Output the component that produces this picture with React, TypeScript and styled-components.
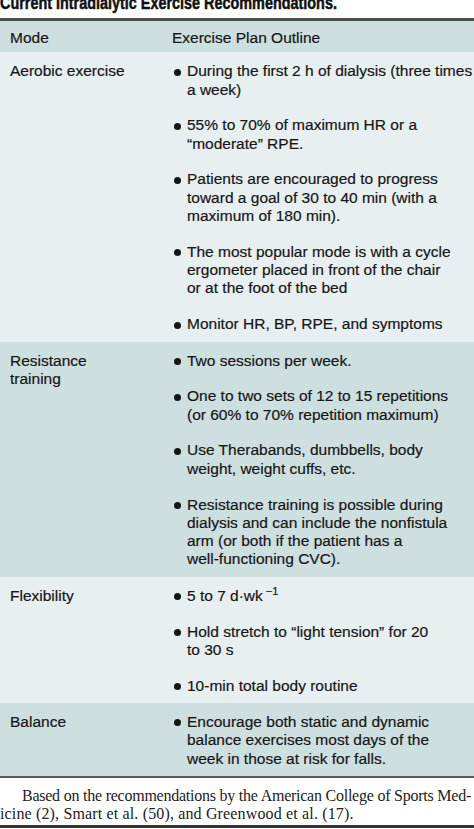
import React from "react";
import styled, { createGlobalStyle } from "styled-components";

const GlobalStyle = createGlobalStyle`
  html, body {
    margin: 0;
    padding: 0;
    background: #ffffff;
    overflow: hidden;
  }
`;

type Tone = "dark" | "light";

type Section = {
  mode: string[];
  tone: Tone;
  bullets: React.ReactNode[][];
};

const Sup = styled.sup`
  font-size: 11px;
  line-height: 0;
  vertical-align: 6px;
  margin-left: 3px;
`;

const sections: Section[] = [
  {
    mode: ["Aerobic exercise"],
    tone: "light",
    bullets: [
      ["During the first 2 h of dialysis (three times", "a week)"],
      ["55% to 70% of maximum HR or a", "\u201Cmoderate\u201D RPE."],
      [
        "Patients are encouraged to progress",
        "toward a goal of 30 to 40 min (with a",
        "maximum of 180 min).",
      ],
      [
        "The most popular mode is with a cycle",
        "ergometer placed in front of the chair",
        "or at the foot of the bed",
      ],
      ["Monitor HR, BP, RPE, and symptoms"],
    ],
  },
  {
    mode: ["Resistance", "training"],
    tone: "dark",
    bullets: [
      ["Two sessions per week."],
      ["One to two sets of 12 to 15 repetitions", "(or 60% to 70% repetition maximum)"],
      ["Use Therabands, dumbbells, body", "weight, weight cuffs, etc."],
      [
        "Resistance training is possible during",
        "dialysis and can include the nonfistula",
        "arm (or both if the patient has a",
        "well-functioning CVC).",
      ],
    ],
  },
  {
    mode: ["Flexibility"],
    tone: "light",
    bullets: [
      [
        <>
          5 to 7 d·wk<Sup>{"\u22121"}</Sup>
        </>,
      ],
      ["Hold stretch to \u201Clight tension\u201D for 20", "to 30 s"],
      ["10-min total body routine"],
    ],
  },
  {
    mode: ["Balance"],
    tone: "dark",
    bullets: [
      [
        "Encourage both static and dynamic",
        "balance exercises most days of the",
        "week in those at risk for falls.",
      ],
    ],
  },
];

const Page = styled.div`
  width: 474px;
  color: #161616;
  font-family: "Liberation Sans", Arial, sans-serif;
`;

const Caption = styled.div`
  height: 29px;
  margin-top: -11px;
  line-height: 29px;
  font-size: 18px;
  font-weight: 700;
  color: #111;
  white-space: nowrap;
  transform: scaleX(0.8);
  transform-origin: left center;
  -webkit-text-stroke: 0.5px #111;
`;

const Table = styled.div`
  border-top: 3px solid #4c4c4c;
  border-bottom: 2px solid #5a5a5a;
`;

const Row = styled.div<{ $tone: Tone; $head?: boolean }>`
  display: grid;
  grid-template-columns: 172px 1fr;
  padding: ${(p) => (p.$head ? "8px 0 5px" : "10px 0 8px")};
  background: ${(p) => (p.$tone === "dark" ? "#cedfe0" : "#e7eff1")};
  font-size: 15.5px;
  line-height: 18.3px;
  -webkit-text-stroke: 0.2px #161616;
`;

const ModeCell = styled.div`
  padding-left: 10px;
  white-space: nowrap;
`;

const PlanCell = styled.div`
  display: flex;
  flex-direction: column;
  gap: 17.5px;
  white-space: nowrap;
`;

const Bullet = styled.div`
  display: flex;
  align-items: flex-start;
`;

const Dot = styled.span`
  flex: none;
  width: 7px;
  height: 7px;
  margin: 6.5px 6px 0 2px;
  border-radius: 50%;
  background: #151515;
`;

const Footnote = styled.div`
  padding: 9px 3px 2px 0;
  border-bottom: 3px solid #333333;
  font-family: "Liberation Serif", "Times New Roman", serif;
  font-size: 16px;
  line-height: 18px;
  color: #222;
`;

const FootLine = styled.div<{ $first?: boolean }>`
  white-space: nowrap;
  text-indent: ${(p) => (p.$first ? "22px" : "0")};
  text-align: ${(p) => (p.$first ? "justify" : "left")};
  text-align-last: ${(p) => (p.$first ? "justify" : "left")};
  letter-spacing: ${(p) => (p.$first ? "-0.25px" : "0.15px")};
`;

const App = () => {
  return (
    <Page>
      <GlobalStyle />
      <Caption>Current Intradialytic Exercise Recommendations.</Caption>
      <Table>
        <Row $tone="dark" $head>
          <ModeCell>Mode</ModeCell>
          <PlanCell>Exercise Plan Outline</PlanCell>
        </Row>
        {sections.map((s) => (
          <Row key={s.mode.join(" ")} $tone={s.tone}>
            <ModeCell>
              {s.mode.map((m, i) => (
                <div key={i}>{m}</div>
              ))}
            </ModeCell>
            <PlanCell>
              {s.bullets.map((lines, i) => (
                <Bullet key={i}>
                  <Dot />
                  <div>
                    {lines.map((l, j) => (
                      <div key={j}>{l}</div>
                    ))}
                  </div>
                </Bullet>
              ))}
            </PlanCell>
          </Row>
        ))}
      </Table>
      <Footnote>
        <FootLine $first>
          Based on the recommendations by the American College of Sports Med-
        </FootLine>
        <FootLine>icine (2), Smart et al. (50), and Greenwood et al. (17).</FootLine>
      </Footnote>
    </Page>
  );
};

export default App;
